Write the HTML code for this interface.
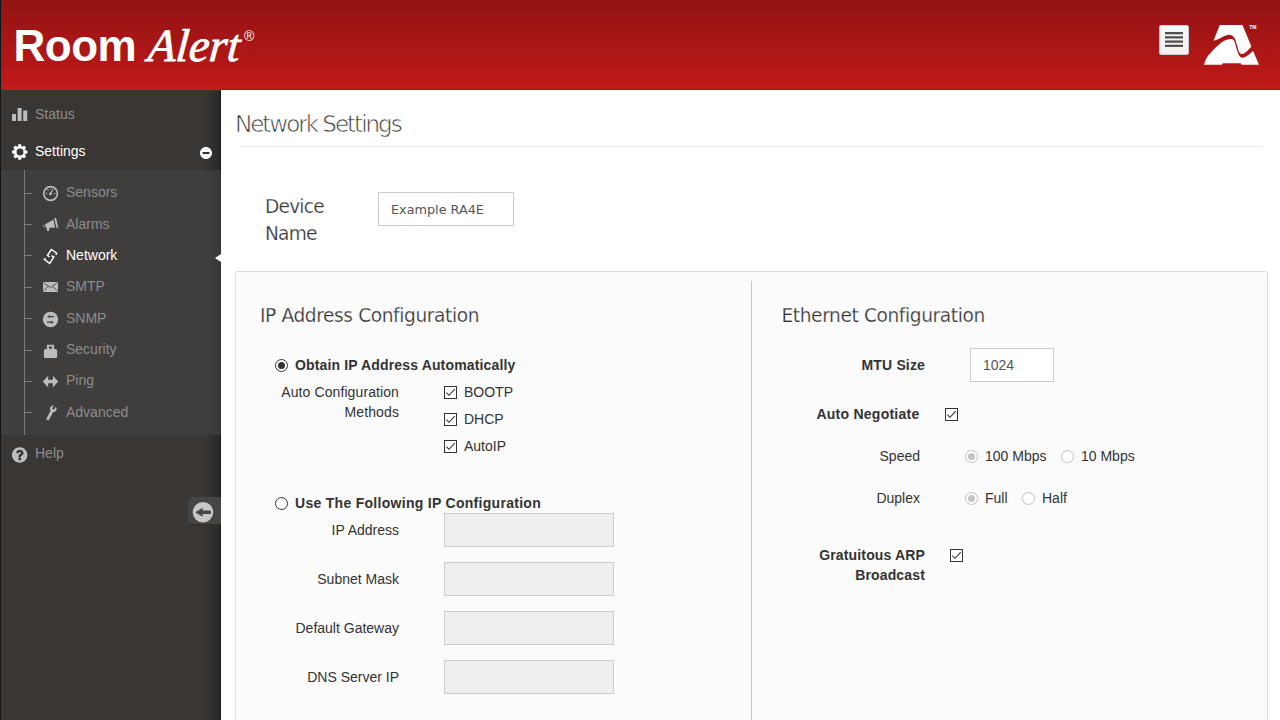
<!DOCTYPE html>
<html lang="en"><head><meta charset="utf-8"><title>Room Alert - Network Settings</title>
<style>
*{box-sizing:border-box}
html,body{margin:0;padding:0;width:1280px;height:720px;overflow:hidden}
body{width:1280px;height:720px;overflow:hidden;background:#fff;position:relative;
 font-family:"Liberation Sans",sans-serif;font-size:14px;color:#333;line-height:20px}
.ic{position:absolute;display:block;overflow:visible}
.abs{position:absolute;white-space:nowrap}
#edge{position:absolute;left:0;top:0;width:1px;height:720px;background:linear-gradient(#0a1a1a 0,#0a1a1a 90px,#141414 90px,#141414 100%)}
#header{position:absolute;left:1px;top:0;width:1279px;height:90px;
 background:linear-gradient(to bottom,#931313 0%,#c01919 100%)}
#header .line{position:absolute;left:220px;right:0;bottom:0;height:1px;background:#bb0a0a}
#header .line2{position:absolute;left:0;width:220px;bottom:0;height:1px;background:#cc1b1b}
#logo{position:absolute;left:0;top:0;height:90px;white-space:nowrap;color:#fff}
#logo .room{position:absolute;left:12.5px;top:20.5px;font:bold 44px/50px "Liberation Sans",sans-serif;letter-spacing:-0.5px}
#logo .alert{position:absolute;left:145.5px;top:18.5px;font:italic 46px/54px "Liberation Serif",serif;-webkit-text-stroke:.8px #fff;transform:skewX(-5deg);transform-origin:0 42px}
#logo .reg{position:absolute;left:243px;top:27.5px;font:14px/16px "Liberation Sans",sans-serif}
#menubtn{position:absolute;left:1158px;top:25px;width:30px;height:30px;border-radius:2px;
 background:linear-gradient(#f8f8f8,#f1f1f1);border:1px solid #c8cccc}
#menubtn i{position:absolute;left:5px;width:18px;height:2px;background:#55504c}
#aside{position:absolute;left:1px;top:90px;width:220px;height:630px;
 background:linear-gradient(to right,#3a3633 93%,#2a2725 100%);border-right:1px solid #1b1918;border-top:1px solid #353737}
#aside .top{position:absolute;left:34px;font-size:14px;line-height:16px;white-space:nowrap}
#sub{position:absolute;left:0;top:79px;width:220px;height:265px;background:rgba(69,69,69,.6)}
#sub .vl{position:absolute;left:23px;top:0;width:1px;height:265px;background:#7a7a7a}
#sub ul{list-style:none;margin:0;padding:0}
#sub li{display:block}
#sub .tk{position:absolute;left:24px;width:7px;height:1px;background:#7a7a7a}
#sub li span{position:absolute;left:65px;line-height:16px;font-size:14px;color:#8c8c8c;white-space:nowrap}
#sub li.active span{color:#fff}
#sub .caret{position:absolute;left:213.5px;width:0;height:0;border:4.1px solid transparent;border-right:6.5px solid #fff;border-left:0}
#mini{position:absolute;left:187px;top:406px;width:33px;height:28px;background:#454545;border-radius:5px 0 0 5px;border-bottom:1px solid #302f2f}
#main{position:absolute;left:221px;top:90px;width:1059px;height:630px;background:#fff;overflow:hidden}
h1{position:absolute;left:14px;top:18px;margin:0;font:normal 23px/32px "DejaVu Sans","Liberation Sans",sans-serif;color:#3c3c3c;letter-spacing:-2px;white-space:nowrap;-webkit-text-stroke:.7px #fff}
#hr{position:absolute;left:19px;top:56px;width:1023px;height:1px;background:#eee}
.os{font-family:"DejaVu Sans","Liberation Sans",sans-serif}
#devlabel{position:absolute;left:44px;top:102.5px;font-size:18.6px;letter-spacing:-.8px;-webkit-text-stroke:.25px #fff;line-height:27px;color:#333}
.inp{position:absolute;height:34px;border:1px solid #ccc;background:#fff;color:#555;font-size:14px;line-height:32px;padding:0 12px;white-space:nowrap;overflow:hidden}
.inp.dis{background:#eee}
#well{position:absolute;left:14px;top:181px;width:1033px;height:560px;background:#fbfbfb;border:1px solid #ddd;border-radius:2px}
#divider{position:absolute;left:515px;top:9px;width:1px;height:560px;background:#c8c8c8}
h3{position:absolute;margin:0;font-weight:normal;font-size:18.6px;letter-spacing:-.4px;-webkit-text-stroke:.25px #fbfbfb;line-height:27px;color:#333;white-space:nowrap}
.lbl{position:absolute;white-space:nowrap;font-size:14px;line-height:20px;color:#333}
.r{text-align:right}
.b{font-weight:bold;letter-spacing:.15px}
.ls29{letter-spacing:.29px}
.ls1{letter-spacing:.1px}
.ls25{letter-spacing:.25px}
.radio{position:absolute;width:13px;height:13px;border:1px solid #333;border-radius:50%;background:#fff}
.radio.on:after{content:"";position:absolute;left:2px;top:2px;width:7px;height:7px;border-radius:50%;background:#333}
.radio.dis{border-color:#c0c0c0}
.radio.dis.on:after{background:#c4c4c4}
.cb{position:absolute;width:13px;height:13px;border:1px solid #333;background:#fff}
.cb svg{position:absolute;left:0;top:0}
</style></head><body>
<div id="header">
 <div class="line"></div><div class="line2"></div>
 <div id="logo"><span class="room">Room</span><span class="alert">Alert</span><span class="reg">&reg;</span></div>
 <div id="menubtn"><svg class="ic" style="left:5px;top:6px" width="18" height="16" viewBox="0 0 18 16" fill="#55504c"><rect x="0" y="0" width="18" height="2.3"/><rect x="0" y="4.2" width="18" height="2.3"/><rect x="0" y="8.45" width="18" height="2.3"/><rect x="0" y="12.7" width="18" height="2.3"/></svg></div>
 <svg class="ic" style="left:1203px;top:25px" width="56" height="40" viewBox="0 0 56 40">
  <path d="M15.8 0 H38.5 L47.4 21.4 C44.5 24.5 41 29 37.7 29 C35 29 34.5 25 33.8 22.8 C33 20 32.2 17.5 31.4 15.1 C30.5 12.5 29.5 11.5 28.6 11.1 C27.5 10.3 26.5 9.7 25.2 9.7 C23 9.7 21 10.7 18.9 11.7 C17 12.6 15 13.6 13.4 14.4 L9.5 15.8 Z" fill="#fff"/>
  <path d="M0 39.8 C.8 37 1.8 34.5 2.9 32.5 C4.5 30 7.5 26.8 9.9 24.2 C12 22 14.5 19.8 16.8 17.9 C19 16.2 21.5 15.2 23.8 14.6 C25 14.3 26.3 14 27.25 14.1 C28.5 14.3 29.4 14.8 30 15.8 C31 17.5 31.5 20 32.1 22.1 C32.8 24.5 33.5 27 34.5 29 C35.3 31 36.5 32.8 38.4 32.8 C40.5 32.8 42.8 31.2 44.6 29.7 C46.2 28.5 47.8 27 49.1 25.9 L55 39.8 H37.7 L36.6 38.2 H18.9 L17.9 39.8 Z" fill="#fff"/>
  <text x="45.3" y="3.8" font-family="Liberation Sans, sans-serif" font-weight="bold" font-size="5" fill="#fff">TM</text>
 </svg>
</div>
<div id="aside">
 <svg class="ic" style="left:11px;top:17px" width="16" height="14" viewBox="0 0 16 14" fill="#bdbdbd"><rect x="0" y="6" width="4" height="7"/><rect x="5.6" y="0" width="4" height="13"/><rect x="11.2" y="2.5" width="4" height="10.5"/></svg>
 <div class="top" style="top:15px;color:#8c8c8c">Status</div>
 <svg class="ic" style="left:11px;top:52.3px;" width="15.429" height="18" viewBox="0 -1536 1536 1792" fill="#fff"><path transform="scale(1,-1)" d="M1024 640C1024 499 909 384 768 384C627 384 512 499 512 640C512 781 627 896 768 896C909 896 1024 781 1024 640ZM1536 749C1536 766 1524 782 1507 785L1324 813C1314 846 1300 879 1283 911C1317 958 1354 1002 1388 1048C1393 1055 1396 1062 1396 1071C1396 1079 1394 1087 1389 1093C1347 1152 1277 1214 1224 1263C1217 1269 1208 1273 1199 1273C1190 1273 1181 1270 1175 1264L1033 1157C1004 1172 974 1184 943 1194L915 1378C913 1395 897 1408 879 1408H657C639 1408 625 1396 621 1380C605 1320 599 1255 592 1194C561 1184 530 1171 501 1156L363 1263C355 1269 346 1273 337 1273C303 1273 168 1127 144 1094C139 1087 135 1080 135 1071C135 1062 139 1054 145 1047C182 1002 218 957 252 909C236 879 223 849 213 817L27 789C12 786 0 768 0 753V531C0 514 12 498 29 495L212 468C222 434 236 401 253 369C219 322 182 278 148 232C143 225 140 218 140 209C140 201 142 193 147 186C189 128 259 66 312 18C319 11 328 7 337 7C346 7 355 10 362 16L503 123C532 108 562 96 593 86L621 -98C623 -115 639 -128 657 -128H879C897 -128 911 -116 915 -100C931 -40 937 25 944 86C975 96 1006 109 1035 124L1173 16C1181 11 1190 7 1199 7C1233 7 1368 154 1392 186C1398 193 1401 200 1401 209C1401 218 1397 227 1391 234C1354 279 1318 323 1284 372C1300 401 1312 431 1323 463L1508 491C1524 494 1536 512 1536 527Z"/></svg>
 <svg class="ic" style="left:14.6px;top:56.9px" width="8" height="8" viewBox="0 0 8 8"><circle cx="4" cy="4" r="3.45" fill="#3a3633"/></svg>
 <div class="top" style="top:52px;color:#fff">Settings</div>
 <svg class="ic" style="left:198.7px;top:55px;" width="12.000" height="14" viewBox="0 -1536 1536 1792" fill="#fff"><path transform="scale(1,-1)" d="M1216 576C1216 541 1187 512 1152 512H384C349 512 320 541 320 576V704C320 739 349 768 384 768H1152C1187 768 1216 739 1216 704V576ZM1536 640C1536 1064 1192 1408 768 1408C344 1408 0 1064 0 640C0 216 344 -128 768 -128C1192 -128 1536 216 1536 640Z"/></svg>
 <div id="sub"><div class="vl"></div><ul>
<li class=""><i class="tk" style="top:23px"></i><svg class="ic" style="left:37px;top:10px" width="28" height="28" viewBox="0 0 28 28"><circle cx="12.55" cy="13.5" r="6.85" fill="none" stroke="#bdbdbd" stroke-width="1.7"/><circle cx="12.45" cy="13.9" r="1.35" fill="#bdbdbd"/><path d="M12.5 13.8 L15 9.3" stroke="#bdbdbd" stroke-width="1.2"/><circle cx="8.5" cy="13.6" r=".75" fill="#bdbdbd"/><circle cx="16.6" cy="13.6" r=".75" fill="#bdbdbd"/><circle cx="9.9" cy="9.8" r=".75" fill="#bdbdbd"/><circle cx="12.5" cy="8.9" r=".5" fill="#bdbdbd"/></svg><span style="top:14px">Sensors</span></li>
<li class=""><i class="tk" style="top:54px"></i><svg class="ic" style="left:37px;top:41px" width="28" height="28" viewBox="0 0 28 28"><path d="M7 13.2 L15.4 8.75 L17.1 16.5 L11.3 16.7 L11.1 20 L8.95 20 L8.75 17.1 L8 17.1 Z" fill="#bdbdbd"/><path d="M16.1 7.2 L18.1 7 L20.2 16.7 L18.7 17.1 Z" fill="#bdbdbd"/><path d="M4.9 14.2 L5.8 13.8 L6.8 16.7 L5.8 16.3 Z" fill="#bdbdbd"/></svg><span style="top:46px">Alarms</span></li>
<li class="active"><i class="tk" style="top:85px"></i><svg class="ic" style="left:37px;top:72px" width="28" height="28" viewBox="0 0 28 28"><g fill="none" stroke="#fff" stroke-width="1.45" stroke-linejoin="miter"><path d="M17.8 12.8 L18.7 11.2 L13.4 7.5 L9.4 13.4 L11.6 15"/><path d="M13.4 13.6 L15.8 15.1 L11.7 21.5 L6.4 17.4 L7.3 16.3"/></g></svg><span style="top:77px">Network</span><b class="caret" style="top:83.7px"></b></li>
<li class=""><i class="tk" style="top:117px"></i><svg class="ic" style="left:37px;top:103px" width="28" height="28" viewBox="0 0 28 28"><rect x="5" y="8.9" width="15" height="10.2" rx=".6" fill="#bdbdbd"/><path d="M5.45 9.7 L12.45 14.6 L19.45 9.7 M5.1 18.1 L10.3 13.4 M19.85 18.1 L14.6 13.4" stroke="#41403e" stroke-width=".85" fill="none"/></svg><span style="top:108px">SMTP</span></li>
<li class=""><i class="tk" style="top:148px"></i><svg class="ic" style="left:37px;top:135px" width="28" height="28" viewBox="0 0 28 28"><circle cx="12.55" cy="14.45" r="7.7" fill="#bdbdbd"/><path d="M9 11.55 L11.9 10 V10.9 H15.95 V12.2 H11.9 V13.1 Z M15.95 17.2 L13 15.65 V16.55 H9 V17.85 H13 V18.75 Z" fill="#41403e"/></svg><span style="top:140px">SNMP</span></li>
<li class=""><i class="tk" style="top:180px"></i><svg class="ic" style="left:37px;top:166px" width="28" height="28" viewBox="0 0 28 28"><rect x="5.9" y="13" width="13.25" height="9.1" rx="1.7" fill="#bdbdbd"/><path fill-rule="evenodd" d="M8.87 8.87 H16.15 V13.6 H8.87 Z M11 10.5 V12.65 H13.9 V10.5 Z" fill="#bdbdbd"/></svg><span style="top:171px">Security</span></li>
<li class=""><i class="tk" style="top:211px"></i><svg class="ic" style="left:37px;top:197px" width="28" height="28" viewBox="0 0 28 28"><path d="M4.75 14.6 L10.2 8.87 V12.85 H14.85 V8.87 L20.2 14.6 L14.85 20.4 V16.35 H10.2 V20.4 Z" fill="#bdbdbd"/></svg><span style="top:202px">Ping</span></li>
<li class=""><i class="tk" style="top:242px"></i><svg class="ic" style="left:37px;top:228px" width="28" height="28" viewBox="0 0 28 28"><g transform="translate(9.35 22) rotate(28)" fill="#bdbdbd"><rect x="-1.4" y="-10.6" width="2.8" height="10.6" rx=".9"/><path d="M-1.15 -15.7 A3.3 3.3 0 1 0 1.15 -15.7 L1.15 -12.2 L-1.15 -12.2 Z"/></g></svg><span style="top:234px">Advanced</span></li>
</ul></div>
 <svg class="ic" style="left:11px;top:354.9px;" width="15.429" height="18" viewBox="0 -1536 1536 1792" fill="#bdbdbd"><path transform="scale(1,-1)" d="M896 160C896 142 882 128 864 128H672C654 128 640 142 640 160V352C640 370 654 384 672 384H864C882 384 896 370 896 352V160ZM1152 832C1152 680 1048 622 972 579C925 552 896 503 896 480C896 462 882 448 864 448H672C654 448 640 462 640 480V516C640 613 737 696 808 728C869 756 896 782 896 834C896 878 837 919 773 919C737 919 704 907 687 895C668 881 648 863 601 803C595 795 585 791 576 791C569 791 562 793 557 797L425 897C412 907 408 925 417 939C503 1082 625 1152 788 1152C960 1152 1152 1015 1152 832ZM1536 640C1536 1064 1192 1408 768 1408C344 1408 0 1064 0 640C0 216 344 -128 768 -128C1192 -128 1536 216 1536 640Z"/></svg>
 <div class="top" style="top:354px;color:#8c8c8c">Help</div>
 <div id="mini"><svg class="ic" style="left:4px;top:3.6px" width="22" height="22" viewBox="0 0 22 22"><circle cx="11" cy="11.3" r="10.25" fill="#c6c6c6"/><path d="M3.35 11.3 L10.6 6.8 V9.5 H18.8 V13.1 H10.6 V15.8 Z" fill="#454545"/></svg></div>
</div>
<div id="main">
 <h1>Network Settings</h1>
 <div id="hr"></div>
 <div id="devlabel" class="os">Device<br>Name</div>
 <div class="inp os" style="left:157px;top:102px;width:136px;font-size:12.8px;line-height:34px">Example RA4E</div>
 <div id="well">
  <div id="divider"></div>
  <h3 class="os" style="left:24px;top:30px">IP Address Configuration</h3>
  <span class="radio on" style="left:39px;top:87px"></span>
  <div class="lbl b" style="left:59px;top:83px">Obtain IP Address Automatically</div>
  <div class="lbl ls1 r" style="right:868px;top:110px">Auto Configuration<br>Methods</div>
  <span class="cb" style="left:208px;top:114px"><svg width="11" height="11" viewBox="0 0 11 11"><path d="M1.4 5.6 L4.0 8.3 L9.8 2.2" fill="none" stroke="#333" stroke-width="1.1"/></svg></span><div class="lbl" style="left:228px;top:110px">BOOTP</div>
  <span class="cb" style="left:208px;top:141px"><svg width="11" height="11" viewBox="0 0 11 11"><path d="M1.4 5.6 L4.0 8.3 L9.8 2.2" fill="none" stroke="#333" stroke-width="1.1"/></svg></span><div class="lbl" style="left:228px;top:137px">DHCP</div>
  <span class="cb" style="left:208px;top:168px"><svg width="11" height="11" viewBox="0 0 11 11"><path d="M1.4 5.6 L4.0 8.3 L9.8 2.2" fill="none" stroke="#333" stroke-width="1.1"/></svg></span><div class="lbl" style="left:228px;top:164px">AutoIP</div>
  <span class="radio" style="left:39px;top:225px"></span>
  <div class="lbl b ls29" style="left:59px;top:221px">Use The Following IP Configuration</div>
  <div class="lbl r" style="right:868px;top:248px">IP Address</div><div class="inp dis" style="left:208px;top:241px;width:170px"></div>
  <div class="lbl r" style="right:868px;top:297px">Subnet Mask</div><div class="inp dis" style="left:208px;top:290px;width:170px"></div>
  <div class="lbl r" style="right:868px;top:346px">Default Gateway</div><div class="inp dis" style="left:208px;top:339px;width:170px"></div>
  <div class="lbl r" style="right:868px;top:395px">DNS Server IP</div><div class="inp dis" style="left:208px;top:388px;width:170px"></div>

  <h3 class="os" style="left:545.5px;top:30px">Ethernet Configuration</h3>
  <div class="lbl b r" style="right:342px;top:83px">MTU Size</div>
  <div class="inp" style="left:734px;top:76px;width:84px">1024</div>
  <div class="lbl b ls25 r" style="right:347.5px;top:132px">Auto Negotiate</div><span class="cb" style="left:709px;top:136px"><svg width="11" height="11" viewBox="0 0 11 11"><path d="M1.4 5.6 L4.0 8.3 L9.8 2.2" fill="none" stroke="#333" stroke-width="1.1"/></svg></span>
  <div class="lbl r" style="right:347px;top:174px">Speed</div><span class="radio on dis" style="left:729px;top:178px"></span><div class="lbl" style="left:749px;top:174px">100 Mbps</div><span class="radio dis" style="left:825px;top:178px"></span><div class="lbl" style="left:845px;top:174px">10 Mbps</div>
  <div class="lbl r" style="right:347px;top:216px">Duplex</div><span class="radio on dis" style="left:729px;top:220px"></span><div class="lbl" style="left:749px;top:216px">Full</div><span class="radio dis" style="left:786px;top:220px"></span><div class="lbl" style="left:806px;top:216px">Half</div>
  <div class="lbl b r" style="right:342px;top:273px">Gratuitous ARP<br>Broadcast</div><span class="cb" style="left:714px;top:277px"><svg width="11" height="11" viewBox="0 0 11 11"><path d="M1.4 5.6 L4.0 8.3 L9.8 2.2" fill="none" stroke="#333" stroke-width="1.1"/></svg></span>
 </div>
</div>
<div id="edge"></div>
</body></html>
